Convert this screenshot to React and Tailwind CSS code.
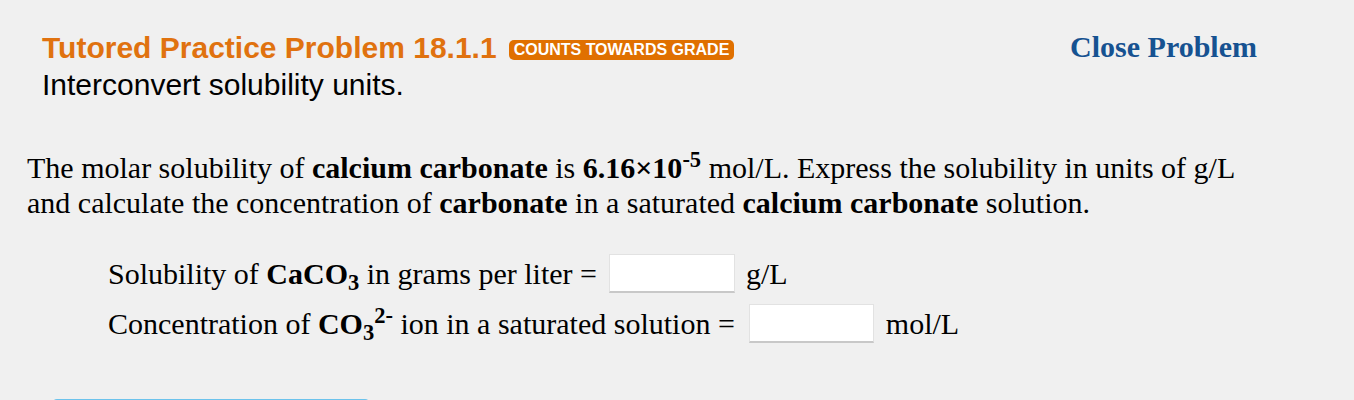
export default function App() {
  const serif = { fontFamily: '"Liberation Serif", "Times New Roman", serif' };
  return (
    <div className="min-h-[400px] w-full bg-[#f0f0f0] overflow-hidden" style={{ fontFamily: '"Liberation Sans", Arial, sans-serif' }}>
      <div className="flex items-start justify-between pl-[42px] pr-[97px] pt-[30px]">
        <div className="mt-[1px]">
          <div className="flex items-center">
            <h1 className="text-[30px] leading-[34px] font-bold text-[#e0720f]">Tutored Practice Problem 18.1.1</h1>
            <span className="ml-[12px] mt-[3px] rounded-[5px] bg-[#e07000] px-[5px] text-[16px] leading-[20px] font-bold text-white">
              COUNTS TOWARDS GRADE
            </span>
          </div>
          <p className="mt-[3px] text-[30px] leading-[34px] text-black">Interconvert solubility units.</p>
        </div>
        <a className="font-bold text-[30px] leading-[34px] text-[#165291] cursor-pointer" style={serif}>Close Problem</a>
      </div>

      <div className="pl-[27px] pt-[48px] text-[30px] leading-[35px] text-black" style={serif}>
        <p>
          The molar solubility of <b>calcium carbonate</b> is <b>6.16×10<sup>-5</sup></b> mol/L. Express the solubility in units of g/L
          <br />
          and calculate the concentration of <b>carbonate</b> in a saturated <b>calcium carbonate</b> solution.
        </p>

        <div className="pl-[81px] pt-[34px] flex flex-col gap-[11px]">
          <div className="flex items-center">
            <span>
              Solubility of <b>CaCO<sub>3</sub></b> in grams per liter =
            </span>
            <input className="ml-[12px] h-[39px] w-[126px] bg-white border border-[#e2e2e2] border-b-[#c8c8c8] border-b-2" />
            <span className="ml-[11px]">g/L</span>
          </div>
          <div className="flex items-center">
            <span>
              Concentration of <b>CO<sub>3</sub><sup>2-</sup></b> ion in a saturated solution =
            </span>
            <input className="ml-[14px] h-[39px] w-[125px] bg-white border border-[#e2e2e2] border-b-[#c8c8c8] border-b-2" />
            <span className="ml-[12px]">mol/L</span>
          </div>
        </div>
      </div>

      <div className="ml-[53px] mt-[56px] h-[20px] w-[316px] rounded-t-[4px] bg-[#6cc3ec]" />
    </div>
  );
}
